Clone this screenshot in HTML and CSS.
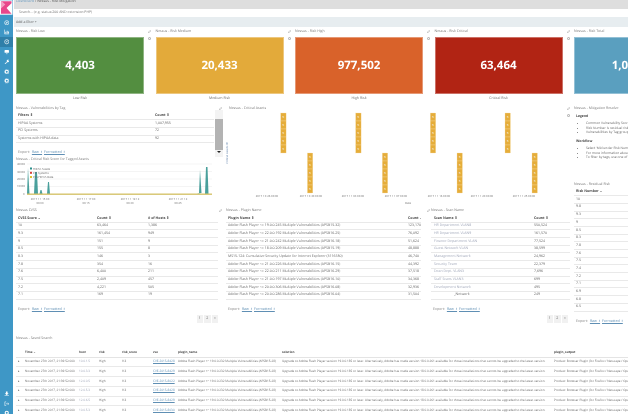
FILE: index.html
```html
<!DOCTYPE html>
<html lang="en">
<head>
<meta charset="utf-8">
<title>Nessus - Risk Mitigation</title>
<link rel="stylesheet" href="styles.css">
</head>
<body>
<svg class="defs" width="0" height="0" aria-hidden="true">
  <symbol id="pencil" viewBox="0 0 10 10"><path d="M1 9l.6-2.6L7 1l2 2-5.4 5.4z" fill="none" stroke="currentColor" stroke-width="1.2"/></symbol>
  <symbol id="gear" viewBox="0 0 10 10"><circle cx="5" cy="5" r="3.2" fill="none" stroke="currentColor" stroke-width="1.8"/><circle cx="5" cy="5" r="4.6" fill="none" stroke="currentColor" stroke-width="1" stroke-dasharray="1.4 1.4"/></symbol>
</svg>
<div class="app">
  <nav class="sidebar">
    <svg class="logo" viewBox="0 0 13 15"><rect width="13" height="15" fill="#fff"/><path d="M1 1h11v2L6.8 8 12 14H1z" fill="#e8488b"/><path d="M1 14V8.500L5.500 4.500 2 1H1z" fill="#f3a0c2"/></svg>
    <ul class="nav-top">
      <li><svg viewBox="0 0 10 10"><circle cx="5" cy="5" r="3.800" fill="none" stroke="#fff" stroke-width="1.200"/><path d="M7 3L5.800 5.800 3 7l1.200-2.800z" fill="#fff"/></svg></li>
      <li><svg viewBox="0 0 10 10"><path d="M1 1v8h8" fill="none" stroke="#fff"/><path d="M2.500 5h1.500v3H2.500zM5 3h1.500v5H5zM7.500 4.500H9V8H7.500z" fill="#fff"/></svg></li>
      <li class="active"><svg viewBox="0 0 10 10"><circle cx="5" cy="5" r="3.800" fill="none" stroke="#fff" stroke-width="1.200"/><path d="M5 5L7 2.800" stroke="#fff"/><circle cx="5" cy="5" r="1" fill="#fff"/></svg></li>
      <li><svg viewBox="0 0 10 10"><rect x="1" y="2" width="8" height="5" rx="1" fill="#fff"/><path d="M3.500 8.500h3" stroke="#fff"/></svg></li>
      <li><svg viewBox="0 0 10 10"><path d="M1.500 8.500l4-4A2.200 2.200 0 0 1 8.500 1.500L7 3l.8.8L9 2.500a2.200 2.200 0 0 1-3.200 2.800L2.500 9.300z" fill="#fff" stroke="#fff" stroke-width=".4"/></svg></li>
      <li><svg viewBox="0 0 10 10"><circle cx="5" cy="5" r="2.800" fill="none" stroke="#fff" stroke-width="2"/><circle cx="5" cy="5" r="4.500" fill="none" stroke="#fff" stroke-dasharray="1.400 1.400"/></svg></li>
      <li><svg viewBox="0 0 10 10"><circle cx="5" cy="5" r="2.800" fill="none" stroke="#fff" stroke-width="2"/><circle cx="5" cy="5" r="4.500" fill="none" stroke="#fff" stroke-dasharray="1.400 1.400"/></svg></li>
    </ul>
    <ul class="nav-bottom">
      <li><svg viewBox="0 0 10 10"><path d="M3.500 1h3v3h2L5 7.500 1.500 4h2zM1 8h8v1.200H1z" fill="#fff"/></svg></li>
      <li><svg viewBox="0 0 10 10"><path d="M4 1.500H1.500v7H4" fill="none" stroke="#fff"/><path d="M3.500 5H9M7 3l2 2-2 2" fill="none" stroke="#fff"/></svg></li>
      <li><svg viewBox="0 0 10 10"><circle cx="5" cy="5" r="2.800" fill="none" stroke="#fff" stroke-width="2"/></svg></li>
    </ul>
  </nav>

  <main class="main">
    <header class="crumbs"><span class="crumb-link">Dashboard</span> / Nessus - Risk Mitigation</header>
    <div class="search">Search... (e.g. status:200 AND extension:PHP)</div>
    <div class="filters">Add a filter +</div>

    <section class="tiles">
      <article class="tile-panel"><h2 class="ptitle">Nessus - Risk Low</h2><div class="tile green">4,403</div><p class="tile-label">Low Risk</p></article>
      <article class="tile-panel"><div class="rail"><svg><use href="#pencil"/></svg><svg><use href="#gear"/></svg></div><h2 class="ptitle">Nessus - Risk Medium</h2><div class="tile yellow">20,433</div><p class="tile-label">Medium Risk</p></article>
      <article class="tile-panel"><div class="rail"><svg><use href="#pencil"/></svg><svg><use href="#gear"/></svg></div><h2 class="ptitle">Nessus - Risk High</h2><div class="tile orange">977,502</div><p class="tile-label">High Risk</p></article>
      <article class="tile-panel"><div class="rail"><svg><use href="#pencil"/></svg><svg><use href="#gear"/></svg></div><h2 class="ptitle">Nessus - Risk Critical</h2><div class="tile red">63,464</div><p class="tile-label">Critical Risk</p></article>
      <article class="tile-panel"><div class="rail"><svg><use href="#pencil"/></svg><svg><use href="#gear"/></svg></div><h2 class="ptitle">Nessus - Risk Total</h2><div class="tile blue">1,065,802</div><p class="tile-label">Total Risk</p></article>
    </section>

    <section class="board">
      <div class="stack">
        <article class="panel vuln">
          <h2 class="ptitle">Nessus - Vulnerabilities by Tag</h2>
          <div class="table cols-tag">
            <div class="tr th"><span>Filters ⇕</span><span>Count ⇕</span></div>
            <div class="tr"><span>HIPAA Systems</span><span>1,007,955</span></div>
            <div class="tr"><span>PCI Systems</span><span>72</span></div>
            <div class="tr"><span>Systems with HIPAA data</span><span>92</span></div>
          </div>
          <p class="export">Export: <a>Raw ⭳</a> <a>Formatted ⭳</a></p>
          <div class="scroll"><i class="up"></i><i class="thumb"></i><i class="down"></i></div>
        </article>
        <article class="panel area">
          <h2 class="ptitle">Nessus - Critical Risk Score for Tagged Assets</h2>
          <svg class="area-chart" viewBox="0 3 206 45">
            <g class="ax"><text x="1" y="6">40000</text><text x="1" y="13.500">30000</text><text x="1" y="20.500">20000</text><text x="1" y="28">10000</text><text x="7" y="35.500">0</text></g>
            <g stroke="#e4e4e4" stroke-width=".4"><path d="M11 5h185M11 12.500h185M11 20h185M11 27.500h185"/></g>
            <g fill="#2a8f8b" fill-opacity=".85">
              <path d="M11 35l1-26 1.500 26zM18 35l1-22 2 0 1 22zM23.500 35l1-4 1 0 1 4zM31 35l1-12 1 0 1 12zM181 35l2-1 1-23 1.500 23zM189 35l1-27 1.500 0 1 27z"/>
            </g>
            <rect x="11" y="34.500" width="185" height="1.400" fill="#d5c46c"/>
            <g class="lg"><rect x="14" y="8.500" width="2" height="2" fill="#2a8f8b"/><text x="17" y="10.500">HIPAA Assets</text><rect x="14" y="12.800" width="2" height="2" fill="#d9403a"/><text x="17" y="14.800">PCI Systems</text><rect x="14" y="17" width="2" height="2" fill="#dcc330"/><text x="17" y="19">PSS HIPAA Data</text></g>
            <g class="ax mid"><text x="24" y="40.500">2017-11-15 00</text><text x="24" y="45">00:00</text><text x="70" y="40.500">2017-11-17 00</text><text x="70" y="45">00:15</text><text x="114" y="40.500">2017-11-19 12</text><text x="114" y="45">00:30</text><text x="162" y="40.500">2017-11-21 12</text><text x="162" y="45">00:45</text></g>
          </svg>
        </article>
      </div>

      <article class="panel chart">
        <div class="rail"><svg><use href="#pencil"/></svg></div>
        <h2 class="ptitle">Nessus - Critical Assets</h2>
        <svg class="bar-chart" viewBox="0 0 344 101">
          <text class="ylabel" transform="translate(6 48) rotate(-90)">Critical Assets ID</text>
          <g class="bars">
            <g class="col" transform="translate(58.700 8)"><rect width="5.400" height="8"/><rect y="8" width="5.400" height="8"/><rect y="16" width="5.400" height="8"/><rect y="24" width="5.400" height="8"/><rect y="32" width="5.400" height="8"/><text x="2.700" y="5">5</text><text x="2.700" y="13">5</text><text x="2.700" y="21">5</text><text x="2.700" y="29">5</text><text x="2.700" y="37">5</text></g>
            <g class="col" transform="translate(85.400 48)"><rect width="5.400" height="8"/><rect y="8" width="5.400" height="8"/><rect y="16" width="5.400" height="8"/><rect y="24" width="5.400" height="8"/><rect y="32" width="5.400" height="8"/><text x="2.700" y="5">5</text><text x="2.700" y="13">5</text><text x="2.700" y="21">5</text><text x="2.700" y="29">5</text><text x="2.700" y="37">5</text></g>
            <g class="col" transform="translate(133.700 8)"><rect width="5.400" height="8"/><rect y="8" width="5.400" height="8"/><rect y="16" width="5.400" height="8"/><rect y="24" width="5.400" height="8"/><rect y="32" width="5.400" height="8"/><text x="2.700" y="5">5</text><text x="2.700" y="13">5</text><text x="2.700" y="21">5</text><text x="2.700" y="29">5</text><text x="2.700" y="37">5</text></g>
            <g class="col" transform="translate(160.300 48)"><rect width="5.400" height="8"/><rect y="8" width="5.400" height="8"/><rect y="16" width="5.400" height="8"/><rect y="24" width="5.400" height="8"/><rect y="32" width="5.400" height="8"/><text x="2.700" y="5">5</text><text x="2.700" y="13">5</text><text x="2.700" y="21">5</text><text x="2.700" y="29">5</text><text x="2.700" y="37">5</text></g>
            <g class="col" transform="translate(208.300 8)"><rect width="5.400" height="8"/><rect y="8" width="5.400" height="8"/><rect y="16" width="5.400" height="8"/><rect y="24" width="5.400" height="8"/><rect y="32" width="5.400" height="8"/><text x="2.700" y="5">5</text><text x="2.700" y="13">5</text><text x="2.700" y="21">5</text><text x="2.700" y="29">5</text><text x="2.700" y="37">5</text></g>
            <g class="col" transform="translate(235 48)"><rect width="5.400" height="8"/><rect y="8" width="5.400" height="8"/><rect y="16" width="5.400" height="8"/><rect y="24" width="5.400" height="8"/><rect y="32" width="5.400" height="8"/><text x="2.700" y="5">5</text><text x="2.700" y="13">5</text><text x="2.700" y="21">5</text><text x="2.700" y="29">5</text><text x="2.700" y="37">5</text></g>
            <g class="col" transform="translate(283 8)"><rect width="5.400" height="8"/><rect y="8" width="5.400" height="8"/><rect y="16" width="5.400" height="8"/><rect y="24" width="5.400" height="8"/><rect y="32" width="5.400" height="8"/><text x="2.700" y="5">5</text><text x="2.700" y="13">5</text><text x="2.700" y="21">5</text><text x="2.700" y="29">5</text><text x="2.700" y="37">5</text></g>
            <g class="col" transform="translate(310 48)"><rect width="5.400" height="8"/><rect y="8" width="5.400" height="8"/><rect y="16" width="5.400" height="8"/><rect y="24" width="5.400" height="8"/><rect y="32" width="5.400" height="8"/><text x="2.700" y="5">5</text><text x="2.700" y="13">5</text><text x="2.700" y="21">5</text><text x="2.700" y="29">5</text><text x="2.700" y="37">5</text></g>
          </g>
          <g class="ax mid"><text x="45" y="92">2017-10-26 00:00</text><text x="89" y="92">2017-10-30 00:00</text><text x="131" y="92">2017-11-03 00:00</text><text x="174" y="92">2017-11-07 00:00</text><text x="217" y="92">2017-11-16 00:00</text><text x="260" y="92">2017-11-20 00:00</text><text x="302" y="92">2017-11-25 00:00</text></g>
          <text class="ax" x="183" y="99">Date</text>
        </svg>
      </article>

      <article class="panel mitigation">
        <div class="rail"><svg><use href="#pencil"/></svg><svg><use href="#gear"/></svg></div>
        <h2 class="ptitle">Nessus - Mitigation Resolve</h2>
        <div class="notes">
          <h3>Legend</h3>
          <ul><li>Common Vulnerability Scoring System score details</li><li>Risk Number is residual risk after controls</li><li>Vulnerabilities by Tag groups assets</li></ul>
          <h3>Workflow</h3>
          <ul><li>Select 'Mid under Risk Number</li><li>For more information about the plugin</li><li>To filter by tags, use one of the filters</li></ul>
        </div>
      </article>

      <article class="panel residual">
        <h2 class="ptitle">Nessus - Residual Risk</h2>
        <div class="table cols-one">
          <div class="tr th"><span>Risk Number ⌄</span></div>
          <div class="tr"><span>10</span></div><div class="tr"><span>9.8</span></div><div class="tr"><span>9.3</span></div><div class="tr"><span>9</span></div><div class="tr"><span>8.5</span></div><div class="tr"><span>8.3</span></div><div class="tr"><span>7.8</span></div><div class="tr"><span>7.6</span></div><div class="tr"><span>7.5</span></div><div class="tr"><span>7.4</span></div><div class="tr"><span>7.2</span></div><div class="tr"><span>7.1</span></div><div class="tr"><span>6.9</span></div><div class="tr"><span>6.8</span></div><div class="tr"><span>6.5</span></div>
        </div>
        <p class="export">Export: <a>Raw ⭳</a> <a>Formatted ⭳</a></p>
      </article>

      <article class="panel cvss">
        <h2 class="ptitle">Nessus CVSS</h2>
        <div class="table cols-cvss">
          <div class="tr th"><span>CVSS Score ⌄</span><span>Count ⇕</span><span># of Hosts ⇕</span></div>
          <div class="tr"><span>10</span><span>63,464</span><span>1,386</span></div>
          <div class="tr"><span>9.3</span><span>161,454</span><span>949</span></div>
          <div class="tr"><span>9</span><span>151</span><span>9</span></div>
          <div class="tr"><span>8.5</span><span>155</span><span>8</span></div>
          <div class="tr"><span>8.3</span><span>146</span><span>3</span></div>
          <div class="tr"><span>7.8</span><span>354</span><span>16</span></div>
          <div class="tr"><span>7.6</span><span>6,400</span><span>211</span></div>
          <div class="tr"><span>7.5</span><span>2,409</span><span>457</span></div>
          <div class="tr"><span>7.2</span><span>4,221</span><span>505</span></div>
          <div class="tr"><span>7.1</span><span>169</span><span>19</span></div>
        </div>
        <p class="export">Export: <a>Raw ⭳</a> <a>Formatted ⭳</a></p>
        <div class="pager"><b>1</b><b>2</b><b>»</b></div>
      </article>

      <article class="panel plugin">
        <div class="rail"><svg><use href="#pencil"/></svg></div>
        <h2 class="ptitle">Nessus - Plugin Name</h2>
        <div class="table cols-plugin">
          <div class="tr th"><span>Plugin Name ⇕</span><span>Count ⌄</span></div>
          <div class="tr"><span>Adobe Flash Player &lt;= 19.0.0.245 Multiple Vulnerabilities (APSB15-32)</span><span>123,170</span></div>
          <div class="tr"><span>Adobe Flash Player &lt;= 22.0.0.192 Multiple Vulnerabilities (APSB16-25)</span><span>76,092</span></div>
          <div class="tr"><span>Adobe Flash Player &lt;= 21.0.0.242 Multiple Vulnerabilities (APSB16-18)</span><span>51,624</span></div>
          <div class="tr"><span>Adobe Flash Player &lt;= 18.0.0.209 Multiple Vulnerabilities (APSB15-19)</span><span>48,888</span></div>
          <div class="tr"><span>MS15-124: Cumulative Security Update for Internet Explorer (3116180)</span><span>46,740</span></div>
          <div class="tr"><span>Adobe Flash Player &lt;= 21.0.0.226 Multiple Vulnerabilities (APSB16-15)</span><span>44,392</span></div>
          <div class="tr"><span>Adobe Flash Player &lt;= 22.0.0.211 Multiple Vulnerabilities (APSB16-29)</span><span>37,518</span></div>
          <div class="tr"><span>Adobe Flash Player &lt;= 21.0.0.197 Multiple Vulnerabilities (APSB16-10)</span><span>34,368</span></div>
          <div class="tr"><span>Adobe Flash Player &lt;= 20.0.0.306 Multiple Vulnerabilities (APSB16-08)</span><span>32,936</span></div>
          <div class="tr"><span>Adobe Flash Player &lt;= 20.0.0.286 Multiple Vulnerabilities (APSB16-04)</span><span>31,504</span></div>
        </div>
        <p class="export">Export: <a>Raw ⭳</a> <a>Formatted ⭳</a></p>
      </article>

      <article class="panel scan">
        <div class="rail"><svg><use href="#pencil"/></svg></div>
        <h2 class="ptitle">Nessus - Scan Name</h2>
        <div class="table cols-scan">
          <div class="tr th"><span>Scan Name ⇕</span><span>Count ⇕</span></div>
          <div class="tr"><span class="soft">HR Department VLAN8</span><span>550,524</span></div>
          <div class="tr"><span class="soft">HR Department VLAN9</span><span>161,570</span></div>
          <div class="tr"><span class="soft">Finance Department VLAN</span><span>77,524</span></div>
          <div class="tr"><span class="soft">Guest Network VLAN</span><span>38,599</span></div>
          <div class="tr"><span class="soft">Management Network</span><span>24,962</span></div>
          <div class="tr"><span class="soft">Security Team</span><span>22,379</span></div>
          <div class="tr"><span class="soft">Dean Dept. VLAN3</span><span>7,696</span></div>
          <div class="tr"><span class="soft">Staff Scans VLAN3</span><span>699</span></div>
          <div class="tr"><span class="soft">Development Network</span><span>495</span></div>
          <div class="tr"><span class="indent">_Network</span><span>249</span></div>
        </div>
        <p class="export">Export: <a>Raw ⭳</a> <a>Formatted ⭳</a></p>
        <div class="pager"><b>1</b><b>2</b><b>»</b></div>
      </article>
    </section>

    <section class="saved">
      <h2 class="ptitle">Nessus - Saved Search</h2>
      <div class="table cols-saved">
        <div class="tr th"><span></span><span>Time ⌄</span><span>host</span><span>risk</span><span>risk_score</span><span>cve</span><span>plugin_name</span><span>solution</span><span>plugin_output</span></div>
        <div class="tr"><span>▸</span><span>November 27th 2017, 21:39:52.000</span><span class="soft">10.0.1.5</span><span>High</span><span>9.3</span><span><a class="cve">CVE-2015-8428</a></span><span>Adobe Flash Player &lt;= 19.0.0.232 Multiple Vulnerabilities (APSB15-28)</span><span>Upgrade to Adobe Flash Player version 19.0.0.185 or later. Alternatively, Adobe has made version 18.0.0.261 available for those installations that cannot be upgraded to the latest version.</span><span>Product: Browser Plugin (for Firefox / Netscape / Opera)</span></div>
        <div class="tr"><span>▸</span><span>November 27th 2017, 21:39:52.000</span><span class="soft">10.0.3.3</span><span>High</span><span>9.3</span><span><a class="cve">CVE-2015-8429</a></span><span>Adobe Flash Player &lt;= 19.0.0.232 Multiple Vulnerabilities (APSB15-28)</span><span>Upgrade to Adobe Flash Player version 19.0.0.185 or later. Alternatively, Adobe has made version 18.0.0.261 available for those installations that cannot be upgraded to the latest version.</span><span>Product: Browser Plugin (for Firefox / Netscape / Opera)</span></div>
        <div class="tr"><span>▸</span><span>November 27th 2017, 21:39:52.000</span><span class="soft">12.0.0.5</span><span>High</span><span>9.3</span><span><a class="cve">CVE-2015-8022</a></span><span>Adobe Flash Player &lt;= 19.0.0.232 Multiple Vulnerabilities (APSB15-28)</span><span>Upgrade to Adobe Flash Player version 19.0.0.185 or later. Alternatively, Adobe has made version 18.0.0.261 available for those installations that cannot be upgraded to the latest version.</span><span>Product: Browser Plugin (for Firefox / Netscape / Opera)</span></div>
        <div class="tr"><span>▸</span><span>November 27th 2017, 21:39:52.000</span><span class="soft">12.0.5.3</span><span>High</span><span>9.3</span><span><a class="cve">CVE-2015-8428</a></span><span>Adobe Flash Player &lt;= 19.0.0.232 Multiple Vulnerabilities (APSB15-28)</span><span>Upgrade to Adobe Flash Player version 19.0.0.185 or later. Alternatively, Adobe has made version 18.0.0.261 available for those installations that cannot be upgraded to the latest version.</span><span>Product: Browser Plugin (for Firefox / Netscape / Opera)</span></div>
        <div class="tr"><span>▸</span><span>November 27th 2017, 21:39:52.000</span><span class="soft">12.0.6.5</span><span>High</span><span>9.3</span><span><a class="cve">CVE-2015-8429</a></span><span>Adobe Flash Player &lt;= 19.0.0.232 Multiple Vulnerabilities (APSB15-28)</span><span>Upgrade to Adobe Flash Player version 19.0.0.185 or later. Alternatively, Adobe has made version 18.0.0.261 available for those installations that cannot be upgraded to the latest version.</span><span>Product: Browser Plugin (for Firefox / Netscape / Opera)</span></div>
        <div class="tr"><span>▸</span><span>November 27th 2017, 21:39:52.000</span><span class="soft">10.0.5.3</span><span>High</span><span>9.3</span><span><a class="cve">CVE-2015-8030</a></span><span>Adobe Flash Player &lt;= 19.0.0.232 Multiple Vulnerabilities (APSB15-28)</span><span>Upgrade to Adobe Flash Player version 19.0.0.185 or later. Alternatively, Adobe has made version 18.0.0.261 available for those installations that cannot be upgraded to the latest version.</span><span>Product: Browser Plugin (for Firefox / Netscape / Opera)</span></div>
      </div>
    </section>
  </main>
</div>
</body>
</html>
```
FILE: styles.css
```css
* { box-sizing: border-box; }
html, body { margin: 0; height: 100%; }
body { width: 628px; height: 414px; overflow: hidden; background: #fff; color: #6a6a6a; font: 3.5px/1 "Open Sans", "Liberation Sans", sans-serif; text-rendering: geometricPrecision; }
.defs { position: absolute; }
h2, h3, p, ul { margin: 0; padding: 0; font-weight: 400; }
a { color: #5f8fb4; text-decoration: underline; }
.app { display: flex; height: 414px; }

.sidebar { flex: 0 0 13.500px; background: #3e97c6; border-right: 1px solid #fff; display: flex; flex-direction: column; }
.logo { display: block; width: 12.500px; height: 15px; }
.nav-top, .nav-bottom { list-style: none; display: flex; flex-direction: column; align-items: center; }
.nav-top { padding-top: 2.500px; }
.nav-top li, .nav-bottom li { width: 100%; height: 9.800px; display: flex; align-items: center; justify-content: center; }
.nav-top li.active { background: #2f7fa9; }
.nav-top svg, .nav-bottom svg { width: 5.500px; height: 5.500px; }
.nav-bottom { margin-top: auto; margin-bottom: -4px; }

.main { flex: 1; min-width: 0; overflow: hidden; filter: blur(.2px); }
.crumbs { height: 8.500px; background: #dedede; padding: 0 0 0 2.500px; line-height: 3px; font-size: 3.500px; color: #555; }
.crumb-link { color: #6d9cc0; }
.search { height: 8.500px; background: #fff; padding-left: 5.500px; line-height: 8px; color: #777; font-size: 3.500px; }
.filters { height: 10px; background: #e7edf0; padding-left: 2.500px; line-height: 11px; color: #555; }

.ptitle { font-size: 3.500px; line-height: 4px; color: #777; }

.tiles { display: flex; padding: 1px 0 0 2.500px; height: 78px; width: 740px; }
.tile-panel { position: relative; flex: 0 0 139.500px; padding-top: 2px; }
.tile { width: 128px; height: 56.500px; margin-top: 3px; display: flex; align-items: center; justify-content: center; color: #fff; font-weight: 700; font-size: 11.500px; border: 1px solid rgba(255,255,255,.35); }
.green { background: #538e40; }
.yellow { background: #e3aa3a; }
.orange { background: #d9622a; }
.red { background: #b12414; }
.blue { background: #5a9fbf; }
.tile-label { width: 128px; text-align: center; margin-top: 3px; }
.rail { position: absolute; display: flex; flex-direction: column; gap: 4px; color: #888; }
.tile-panel .rail { left: -7.500px; top: 1.500px; }
.rail svg { width: 3.200px; height: 3.200px; display: block; }

.board { display: grid; grid-template-columns: 206px 203px 141px 62px; grid-template-rows: 79px 22px 129px; padding-left: 2.500px; width: 615px; }
.panel { position: relative; min-width: 0; }
.stack { grid-column: 1; grid-row: 1 / span 2; display: flex; flex-direction: column; min-height: 0; }
.vuln { flex: none; height: 52px; padding: 1.500px 8px 0 0; }
.area { flex: none; padding-top: .500px; }
.area-chart { display: block; width: 206px; height: 45px; }
.chart { grid-column: 2 / span 2; grid-row: 1 / span 2; padding: 1.500px 0 0 7px; }
.chart .rail { left: -3px; top: 1.500px; }
.bar-chart { display: block; width: 344px; height: 101px; margin: -5.500px 0 0 -7px; }
.mitigation { grid-column: 4; grid-row: 1; padding: 1.500px 0 0 8px; overflow: visible; }
.mitigation .rail { left: .500px; top: 1.500px; }
.residual { grid-column: 4; grid-row: 2 / span 2; padding: 0 0 0 8px; margin-top: -1px; }
.cvss { grid-column: 1; grid-row: 3; padding-top: 3px; padding-right: 4px; }
.plugin { grid-column: 2; grid-row: 3; padding: 3px 4px 0 4px; }
.plugin .rail { left: -3px; top: 2.500px; }
.scan { grid-column: 3; grid-row: 3; padding: 3px 0 0 6px; }
.scan .rail { left: 2px; top: 3px; }

.table { margin-top: 2px; }
.tr { display: grid; height: 7.700px; align-items: center; border-bottom: .5px solid #e9e9e9; white-space: nowrap; padding-left: 2px; }
.tr > span { overflow: hidden; line-height: 5.500px; }
.th { font-weight: 700; color: #4a4a4a; }
.cols-tag .tr { grid-template-columns: 137px 1fr; }
.cols-cvss .tr { grid-template-columns: 79px 51px 1fr; }
.cols-plugin .tr { grid-template-columns: 180px 1fr; }
.cols-scan .tr { grid-template-columns: 100px 1fr; padding-left: 3px; }
.scan .table { margin-right: -4px; }
.cols-one .tr { grid-template-columns: 1fr; }
.soft { color: #9fa6b8; }
.indent { padding-left: 20px; color: #666; }
.export { margin-top: 8.500px; color: #888; font-size: 3.600px; padding-left: 2px; word-spacing: 1px; }
.pager { display: flex; gap: 1px; justify-content: flex-end; margin-top: 3.500px; }
.pager b { width: 6.500px; height: 7.500px; background: #f1f1f1; display: flex; align-items: center; justify-content: center; font-weight: 400; }
.scan .pager { margin-right: -2px; }
.vuln .export { margin-top: 8px; }
.residual .table { margin-top: 1.500px; }
.residual .export { margin-top: 8.500px; }
.scroll { position: absolute; left: 199px; top: 4.500px; width: 7.500px; height: 47px; background: #f3f3f3; display: flex; flex-direction: column; align-items: center; }
.scroll .up { height: 9px; flex: none; }
.scroll .thumb { width: 100%; height: 31px; background: #b3b3b3; }
.scroll .down { margin-top: 1px; width: 0; height: 0; border: 2px solid transparent; border-top: 2.500px solid #222; }

.notes { margin-top: 1px; font-size: 3.300px; white-space: nowrap; }
.notes h3 { font-size: 3.400px; font-weight: 700; color: #444; margin: 3px 0 4.200px 2px; }
.notes ul { padding-left: 12px; margin-bottom: 4.500px; line-height: 4.400px; }

svg text { font-family: "Open Sans", "Liberation Sans", sans-serif; }
.ax text, text.ax { font-size: 2.800px; fill: #777; }
.ax.mid text { text-anchor: middle; }
.lg text { font-size: 2.800px; fill: #666; }
.col rect { fill: #e5ad3a; stroke: #f6dfac; stroke-width: .3px; }
.col text { font-size: 2.800px; fill: #fff; text-anchor: middle; }
.ylabel { font-size: 2.800px; fill: #5d7fa8; text-anchor: middle; }

.saved { padding: 1.500px 0 0 2.500px; }
.saved .ptitle { margin-bottom: 9px; }
.cols-saved { margin-top: 0; }
.cols-saved .tr { grid-template-columns: 7px 54px 20px 23px 31px 25px 104px 272px 100px; height: 9.700px; width: 700px; font-size: 3.050px; }
.cols-saved .tr.th { height: 8.300px; border-bottom: .5px solid #e4e4e4; }
.cve { color: #5f8fb4; font-size: 3.100px; }
```
